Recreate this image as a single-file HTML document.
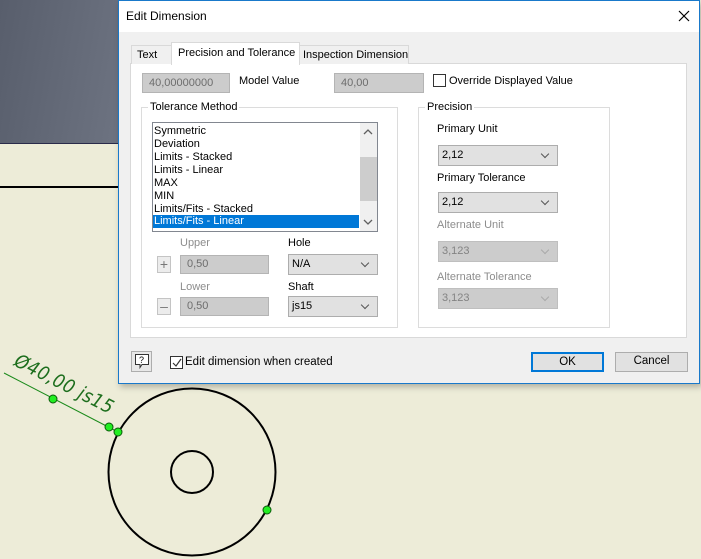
<!DOCTYPE html>
<html><head><style>
*{margin:0;padding:0;box-sizing:border-box}
body{width:701px;height:559px;overflow:hidden;background:#edecd8;font-family:"Liberation Sans",sans-serif;font-size:11px;color:#000;position:relative}
.a{position:absolute}
.t{position:absolute;white-space:nowrap;line-height:13px}
.fld{position:absolute;background:#ccc;border:1px solid #b4b4b4;color:#6d6d6d;padding-left:6px;line-height:17px}
.cb{position:absolute;background:#e1e1e1;border:1px solid #adadad;padding-left:3px;line-height:18px}
.cb.d{background:#ccc;border-color:#bfbfbf;color:#838383}
.cb:after{content:"";position:absolute;right:9px;top:5px;width:5px;height:5px;border-right:1px solid #555;border-bottom:1px solid #555;transform:rotate(45deg)}
.cb.d:after{border-color:#aaa}
.grp{position:absolute;border:1px solid #dcdcdc}
.gl{position:absolute;background:#f0f0f0;padding:0 2px;top:-7px;left:6px;line-height:13px}
.dis{color:#8d8d8d}
.btn{position:absolute;background:#e1e1e1;border:1px solid #adadad;text-align:center;line-height:17px;font-size:11.5px}
</style></head><body>
<div class="a" style="left:0;top:0;width:118px;height:144px;background:linear-gradient(100deg,#585e6c,#6d7381);border-bottom:1px solid #2a2b4a"></div>
<div class="a" style="left:0;top:186px;width:118px;height:2px;background:#000"></div>
<svg class="a" style="left:0;top:0" width="701" height="559">
<circle cx="192" cy="472" r="83.5" fill="none" stroke="#000" stroke-width="2"/>
<circle cx="192" cy="472" r="21" fill="none" stroke="#000" stroke-width="2"/>
<line x1="4" y1="373" x2="118" y2="432" stroke="#1a8a1a" stroke-width="1"/>
<g fill="#22ee22" stroke="#0a5a0a" stroke-width="1"><circle cx="53" cy="399" r="4"/><circle cx="109" cy="427" r="4"/><circle cx="118" cy="432" r="4"/><circle cx="267" cy="510" r="4"/></g>
<text x="13" y="365" transform="rotate(27 13 365)" fill="#1d6e1d" font-family="DejaVu Sans Condensed, DejaVu Sans" font-size="19" font-style="oblique" letter-spacing="0.5">Ø40,00 js15</text>
</svg>
<div class="a" style="left:118px;top:0;width:582px;height:384px;background:#f0f0f0;border:1px solid #1979ca;box-shadow:2px 3px 6px rgba(0,0,0,.25)">
<div class="a" style="left:0;top:0;width:580px;height:31px;background:#fff"></div>
<div class="t" style="left:7px;top:9px;font-size:12px">Edit Dimension</div>
<svg class="a" style="left:559px;top:9px" width="12" height="12"><path d="M1 1L11 11M11 1L1 11" stroke="#000" stroke-width="1.2"/></svg>
</div>
<!-- tabs -->
<div class="a" style="left:130px;top:63px;width:557px;height:275px;background:#fff;border:1px solid #d9d9d9"></div>
<div class="a" style="left:131px;top:45px;width:41px;height:19px;background:#f0f0f0;border:1px solid #d9d9d9;border-bottom:none"></div>
<div class="t" style="left:137px;top:49px">Text</div>
<div class="a" style="left:171px;top:42px;width:129px;height:23px;background:#fff;border:1px solid #d9d9d9;border-bottom:none"></div>
<div class="t" style="left:178px;top:47px">Precision and Tolerance</div>
<div class="a" style="left:299px;top:45px;width:110px;height:19px;background:#f0f0f0;border:1px solid #d9d9d9;border-bottom:none"></div>
<div class="t" style="left:303px;top:49px">Inspection Dimension</div>
<!-- top row -->
<div class="fld" style="left:142px;top:73px;width:88px;height:20px;line-height:19px">40,00000000</div>
<div class="t" style="left:239px;top:75px">Model Value</div>
<div class="fld" style="left:334px;top:73px;width:90px;height:20px;line-height:19px">40,00</div>
<div class="a" style="left:433px;top:74px;width:13px;height:13px;border:1px solid #333;background:#fff"></div>
<div class="t" style="left:449px;top:75px">Override Displayed Value</div>
<!-- tolerance group -->
<div class="grp" style="left:141px;top:107px;width:257px;height:221px;background:#fff"><div class="gl" style="background:#fff">Tolerance Method</div></div>
<div class="a" style="left:152px;top:122px;width:226px;height:110px;border:1px solid #828790;background:#fff"></div>
<div class="t" style="left:154px;top:125px;line-height:13px">Symmetric<br>Deviation<br>Limits - Stacked<br>Limits - Linear<br>MAX<br>MIN<br>Limits/Fits - Stacked</div>
<div class="a" style="left:153px;top:215px;width:206px;height:13px;background:#0078d7"></div>
<div class="t" style="left:154px;top:215px;color:#fff">Limits/Fits - Linear</div>
<div class="a" style="left:360px;top:123px;width:17px;height:108px;background:#f0f0f0"></div>
<div class="a" style="left:360px;top:157px;width:17px;height:44px;background:#cdcdcd"></div>
<svg class="a" style="left:363px;top:128px" width="10" height="100"><path d="M1 6L5 2L9 6M1 92L5 96L9 92" fill="none" stroke="#606060" stroke-width="1.3"/></svg>
<div class="t dis" style="left:180px;top:237px">Upper</div>
<div class="btn" style="left:157px;top:256px;width:14px;height:17px;color:#777;font-size:14px;line-height:15px;background:#ececec;border-color:#c4c4c4">+</div>
<div class="fld" style="left:180px;top:255px;width:89px;height:19px">0,50</div>
<div class="t dis" style="left:180px;top:281px">Lower</div>
<div class="btn" style="left:157px;top:298px;width:14px;height:17px;color:#777;font-size:14px;line-height:15px;background:#ececec;border-color:#c4c4c4">–</div>
<div class="fld" style="left:180px;top:297px;width:89px;height:19px">0,50</div>
<div class="t" style="left:288px;top:237px">Hole</div>
<div class="cb" style="left:288px;top:254px;width:90px;height:21px">N/A</div>
<div class="t" style="left:288px;top:281px">Shaft</div>
<div class="cb" style="left:288px;top:296px;width:90px;height:21px">js15</div>
<!-- precision -->
<div class="grp" style="left:418px;top:107px;width:192px;height:221px;background:#fff"><div class="gl" style="background:#fff">Precision</div></div>
<div class="t" style="left:437px;top:123px">Primary Unit</div>
<div class="cb" style="left:438px;top:145px;width:120px;height:21px">2,12</div>
<div class="t" style="left:437px;top:172px">Primary Tolerance</div>
<div class="cb" style="left:438px;top:192px;width:120px;height:21px">2,12</div>
<div class="t dis" style="left:437px;top:219px">Alternate Unit</div>
<div class="cb d" style="left:438px;top:241px;width:120px;height:21px">3,123</div>
<div class="t dis" style="left:437px;top:271px">Alternate Tolerance</div>
<div class="cb d" style="left:438px;top:288px;width:120px;height:21px">3,123</div>
<!-- bottom -->
<div class="btn" style="left:131px;top:351px;width:21px;height:21px;background:#e8e8e8"></div>
<svg class="a" style="left:134px;top:353px" width="16" height="17"><path d="M1.5 1.5H14.5V11.5H8L6 14.5V11.5H1.5Z" fill="#fff" stroke="#333"/><text x="5" y="10" font-size="9" font-family="Liberation Sans">?</text></svg>
<div class="a" style="left:170px;top:356px;width:13px;height:13px;border:1px solid #333;background:#fff"></div>
<svg class="a" style="left:172px;top:358px" width="10" height="10"><path d="M1 5L4 8L9 1" fill="none" stroke="#333" stroke-width="1.2"/></svg>
<div class="t" style="left:185px;top:356px;font-size:11.5px">Edit dimension when created</div>
<div class="btn" style="left:531px;top:352px;width:73px;height:20px;border:2px solid #0078d7;line-height:16px">OK</div>
<div class="btn" style="left:615px;top:352px;width:73px;height:20px">Cancel</div>
</body></html>
